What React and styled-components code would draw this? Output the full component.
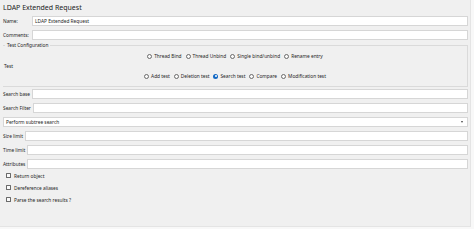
import React from "react";
import styled, { createGlobalStyle } from "styled-components";

const GlobalStyle = createGlobalStyle`
  html, body { margin: 0; padding: 0; background: #f8f8f8; }
  body { font-family: "Noto Sans", "Open Sans", sans-serif; color: #1e1e1e; }
  * { box-sizing: border-box; }
`;

const Page = styled.div`
  width: 471px;
  height: 227px;
  background: #f0f0f0;
  border-right: 1px solid #e4e4e4;
  border-bottom: 1px solid #e4e4e4;
  padding: 0 2px 0 3px;
  display: flex;
  flex-direction: column;
  font-size: 4.8px;
`;

const Title = styled.div`
  height: 16px;
  font-size: 7px;
  line-height: 16px;
  color: #222;
`;

const NameGrid = styled.div`
  display: grid;
  grid-template-columns: 27px 1fr;
  column-gap: 2px;
  row-gap: 4px;
  align-items: center;
`;

const Label = styled.span`
  font-size: 4.8px;
  white-space: nowrap;
  line-height: 10px;
`;

const Input = styled.div`
  height: 10px;
  flex: 1;
  background: #ffffff;
  border: 1px solid #d6d6d6;
  font-size: 4.8px;
  line-height: 8px;
  padding-left: 2px;
  white-space: nowrap;
`;

const Fieldset = styled.fieldset`
  margin: 1px 0 0 0;
  padding: 2px 0 5px 0;
  border: 1px solid #dadada;
  border-left: none;
  min-width: 0;
`;

const Legend = styled.legend`
  font-size: 4.8px;
  padding: 0 2px;
  margin-left: 2px;
  line-height: 8px;
`;

const RadioRow = styled.div`
  height: 10px;
  display: flex;
  align-items: center;
  justify-content: center;
  gap: 4px;
`;

const SideLabel = styled.div`
  height: 10px;
  line-height: 10px;
  font-size: 4.8px;
  padding-left: 1px;
`;

const RadioItem = styled.label`
  display: flex;
  align-items: center;
  gap: 2px;
  font-size: 4.8px;
  white-space: nowrap;
`;

const RadioDot = styled.span`
  width: 5px;
  height: 5px;
  border-radius: 50%;
  border: ${p => (p.$on ? "none" : "0.6px solid #6a6a6a")};
  background: ${p => (p.$on ? "#1268c4" : "#fafafa")};
  display: flex;
  align-items: center;
  justify-content: center;
  &::after {
    content: "";
    display: ${p => (p.$on ? "block" : "none")};
    width: 2px;
    height: 2px;
    border-radius: 50%;
    background: #fff;
  }
`;

const FieldRows = styled.div`
  display: flex;
  flex-direction: column;
  gap: 4px;
  margin-top: 2px;
`;

const FieldRow = styled.div`
  display: flex;
  align-items: center;
  gap: 2px;
`;

const Select = styled.div`
  height: 10px;
  background: #fff;
  border: 1px solid #d6d6d6;
  display: flex;
  align-items: center;
  justify-content: space-between;
  padding: 0 4px 0 2px;
  font-size: 4.8px;
`;

const Arrow = styled.span`
  width: 0;
  height: 0;
  border-left: 1.8px solid transparent;
  border-right: 1.8px solid transparent;
  border-top: 2.2px solid #444;
`;

const Checks = styled.div`
  display: flex;
  flex-direction: column;
  gap: 6px;
  margin-top: 3.5px;
  padding-left: 3px;
`;

const CheckItem = styled.label`
  display: flex;
  align-items: center;
  gap: 3px;
  font-size: 4.8px;
  height: 6px;
`;

const Box = styled.span`
  width: 5px;
  height: 5px;
  border: 0.6px solid #6a6a6a;
  background: #fafafa;
  border-radius: 0.5px;
`;

const Radio = ({ label, on }) => (
  <RadioItem>
    <RadioDot $on={on} />
    {label}
  </RadioItem>
);

export default function App() {
  return (
    <>
      <GlobalStyle />
      <Page>
        <Title>LDAP Extended Request</Title>
        <NameGrid>
          <Label>Name:</Label>
          <Input>LDAP Extended Request</Input>
          <Label>Comments:</Label>
          <Input />
        </NameGrid>
        <Fieldset>
          <Legend>Test Configuration</Legend>
          <RadioRow>
            <Radio label="Thread Bind" />
            <Radio label="Thread Unbind" />
            <Radio label="Single bind/unbind" />
            <Radio label="Rename entry" />
          </RadioRow>
          <SideLabel>Test</SideLabel>
          <RadioRow>
            <Radio label="Add test" />
            <Radio label="Deletion test" />
            <Radio label="Search test" on />
            <Radio label="Compare" />
            <Radio label="Modification test" />
          </RadioRow>
        </Fieldset>
        <FieldRows>
          <FieldRow>
            <Label>Search base</Label>
            <Input />
          </FieldRow>
          <FieldRow>
            <Label>Search Filter</Label>
            <Input />
          </FieldRow>
          <Select>
            <span>Perform subtree search</span>
            <Arrow />
          </Select>
          <FieldRow>
            <Label>Size limit</Label>
            <Input />
          </FieldRow>
          <FieldRow>
            <Label>Time limit</Label>
            <Input />
          </FieldRow>
          <FieldRow>
            <Label>Attributes</Label>
            <Input />
          </FieldRow>
        </FieldRows>
        <Checks>
          <CheckItem><Box />Return object</CheckItem>
          <CheckItem><Box />Dereference aliases</CheckItem>
          <CheckItem><Box />Parse the search results ?</CheckItem>
        </Checks>
      </Page>
    </>
  );
}
